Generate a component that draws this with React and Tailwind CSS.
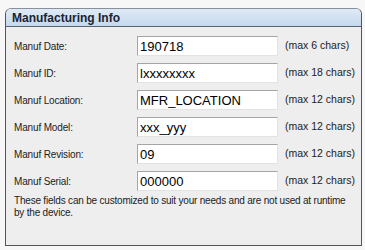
import React from 'react';

const fields = [
  { label: 'Manuf Date:', value: '190718', max: '(max 6 chars)' },
  { label: 'Manuf ID:', value: 'lxxxxxxxx', max: '(max 18 chars)' },
  { label: 'Manuf Location:', value: 'MFR_LOCATION', max: '(max 12 chars)' },
  { label: 'Manuf Model:', value: 'xxx_yyy', max: '(max 12 chars)' },
  { label: 'Manuf Revision:', value: '09', max: '(max 12 chars)' },
  { label: 'Manuf Serial:', value: '000000', max: '(max 12 chars)' },
];

export default function App() {
  return (
    <div
      className="w-[365px] h-[250px] bg-[#f7f7f7] pt-[8px] pl-[5px]"
      style={{ fontFamily: '"Liberation Sans", Arial, sans-serif' }}
    >
      <div className="w-[357px] h-[238px] bg-[#eeeeee] border border-[#555] border-t-[#8a9099] rounded-t-[6px] overflow-hidden flex flex-col">
        <div className="h-[18px] shrink-0 bg-gradient-to-b from-[#dfeaf6] to-[#c4d9ee] border-b border-[#5b6470] pl-[6px] flex items-center">
          <span className="text-[12px] font-bold text-[#1b2431]">Manufacturing Info</span>
        </div>
        <div className="flex flex-col pt-[9px] pl-[8px] gap-[7px]">
          {fields.map((f) => (
            <div key={f.label} className="flex items-center h-[20px]">
              <span className="w-[123px] text-[10px] tracking-[-0.15px] text-[#222]">{f.label}</span>
              <div className="w-[141px] h-[20px] bg-white border border-[#a5a5a5] border-r-[#e3e3e3] border-b-[#e3e3e3] flex items-center pl-[2px]">
                <span className="text-[13px] text-black leading-none">{f.value}</span>
              </div>
              <span className="ml-[7px] text-[10.5px] text-[#222]">{f.max}</span>
            </div>
          ))}
        </div>
        <p className="mt-[4px] pl-[8px] pr-[4px] text-[10px] tracking-[-0.2px] leading-[12px] text-[#222]">
          These fields can be customized to suit your needs and are not used at runtime by the device.
        </p>
      </div>
    </div>
  );
}
